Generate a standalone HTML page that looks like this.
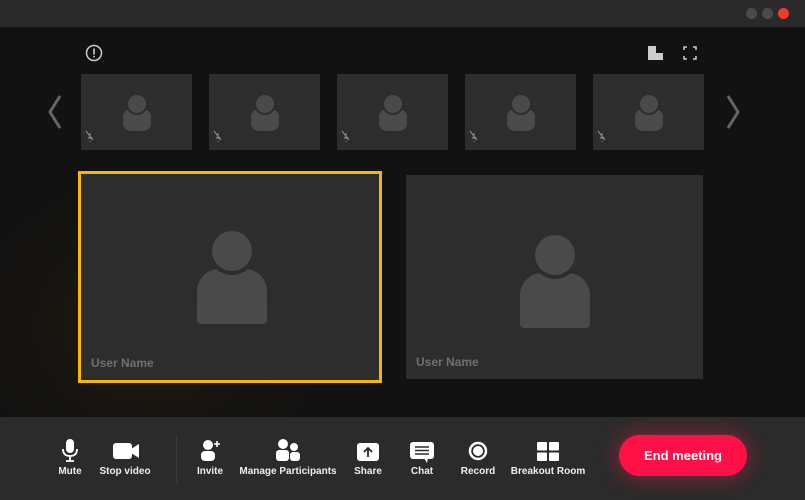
<!DOCTYPE html>
<html><head><meta charset="utf-8"><style>
*{margin:0;padding:0;box-sizing:border-box}
html,body{width:805px;height:500px;overflow:hidden}
body{background:#121212;font-family:"Liberation Sans",sans-serif;position:relative}
.tb{position:absolute;left:0;top:0;width:805px;height:27px;background:#2a2a2a}
.dot{position:absolute;top:8px;width:11px;height:11px;border-radius:50%;background:#4a4a4a}
.main{position:absolute;left:0;top:27px;width:805px;height:390px;background:#121212;overflow:hidden}
.glow{position:absolute;left:-60px;top:120px;width:420px;height:360px;background:radial-gradient(ellipse at center,rgba(90,60,10,.22),rgba(50,35,5,.08) 45%,rgba(0,0,0,0) 70%)}
.th{position:absolute;top:74px;width:111px;height:76px;background:#2d2d2d}
.big{position:absolute;background:#2d2d2d}
.lbl{position:absolute;left:10px;bottom:10px;color:#707070;font-size:12px;font-weight:bold}
.bar{position:absolute;left:0;top:417px;width:805px;height:83px;background:#2b2b2b}
.btn{position:absolute;top:0;text-align:center;color:#eee;font-size:10px;font-weight:bold}
.btn svg{display:block;margin:0 auto}
.btn span{position:absolute;left:50%;transform:translateX(-50%);top:49px;white-space:nowrap}
.end{position:absolute;left:619px;top:435px;width:128px;height:41px;border-radius:21px;background:#ff1148;color:#fff;font-weight:bold;font-size:13px;text-align:center;line-height:41px;box-shadow:0 0 18px 4px rgba(255,30,70,.35)}
</style></head><body>
<div class="main"><div class="glow"></div></div>
<div class="tb">
<div class="dot" style="left:746px"></div><div class="dot" style="left:762px"></div><div class="dot" style="left:778px;background:#f2392e"></div>
</div>
<svg style="position:absolute;left:85px;top:44px" width="18" height="18"><circle cx="9" cy="9" r="7.5" fill="none" stroke="#ccc" stroke-width="1.5"/><rect x="8.2" y="4.5" width="1.6" height="6" fill="#ccc"/><rect x="8.2" y="11.8" width="1.6" height="1.6" fill="#ccc"/></svg>
<svg style="position:absolute;left:648px;top:46px" width="16" height="14"><path d="M0 0H8V7H15V14H0Z" fill="#ccc"/></svg>
<svg style="position:absolute;left:683px;top:46px" width="14" height="14" fill="none" stroke="#ccc" stroke-width="1.5"><path d="M1 4V1H4M10 1H13V4M13 10V13H10M4 13H1V10"/></svg>
<svg style="position:absolute;left:44px;top:94px" width="20" height="36"><path d="M16 2L6 18L16 34" fill="none" stroke="#666" stroke-width="3"/></svg>
<svg style="position:absolute;left:724px;top:94px" width="20" height="36"><path d="M4 2L14 18L4 34" fill="none" stroke="#666" stroke-width="3"/></svg>

<div class="th" style="left:81px"></div><div class="th" style="left:209px"></div><div class="th" style="left:337px"></div><div class="th" style="left:465px"></div><div class="th" style="left:593px"></div>
<svg style="position:absolute;left:0;top:0" width="805" height="160">
<defs><g id="p"><rect x="-14" y="13" width="28" height="22" rx="8" fill="#4a4a4a"/><circle cx="0" cy="8" r="11" fill="#2d2d2d"/><circle cx="0" cy="8" r="9" fill="#4a4a4a"/>
<path d="M-47 37v6M-49 41q2 3 4 0M-51 35l7 9M-47 45v1" stroke="#888" stroke-width="1.1" fill="none"/></g></defs>
<use href="#p" x="137" y="96"/><use href="#p" x="265" y="96"/><use href="#p" x="393" y="96"/><use href="#p" x="521" y="96"/><use href="#p" x="649" y="96"/>
</svg>

<div class="big" style="left:78px;top:171px;width:304px;height:212px;border:3px solid #f5b800"><div class="lbl">User Name</div></div>
<div class="big" style="left:406px;top:175px;width:297px;height:204px"><div class="lbl">User Name</div></div>
<svg style="position:absolute;left:0;top:0" width="805" height="400">
<defs><g id="bp"><rect x="-35" y="18" width="70" height="55" rx="22" fill="#4a4a4a"/><rect x="-35" y="50" width="70" height="23" rx="4" fill="#4a4a4a"/><circle cx="0" cy="0" r="24" fill="#2d2d2d"/><circle cx="0" cy="0" r="20" fill="#4a4a4a"/></g></defs>
<use href="#bp" x="232" y="251"/><use href="#bp" x="555" y="255"/>
</svg>

<div class="bar">
<div style="position:absolute;left:176px;top:18px;width:1px;height:48px;background:#3a3a3a"></div>
<div class="btn" style="left:70px"><svg style="position:absolute;left:-9px;top:22px" width="18" height="24"><rect x="5" y="0" width="8" height="14" rx="4" fill="#fff"/><path d="M2 10q0 7 7 7q7 0 7-7M9 17v5M5 22h8" stroke="#fff" stroke-width="1.8" fill="none"/></svg><span>Mute</span></div>
<div class="btn" style="left:125px"><svg style="position:absolute;left:-12px;top:26px" width="26" height="16"><rect x="0" y="0" width="19" height="16" rx="3" fill="#fff"/><path d="M18 6L26 1V15L18 10Z" fill="#fff"/></svg><span>Stop video</span></div>
<div class="btn" style="left:210px"><svg style="position:absolute;left:-10px;top:22px" width="22" height="22"><circle cx="8" cy="6" r="5" fill="#fff"/><rect x="1" y="12" width="14" height="10" rx="4" fill="#fff"/><path d="M17 2v6M14 5h6" stroke="#fff" stroke-width="1.6"/></svg><span>Invite</span></div>
<div class="btn" style="left:288px"><svg style="position:absolute;left:-12px;top:22px" width="24" height="22"><circle cx="7" cy="5" r="5" fill="#fff"/><rect x="0" y="11" width="13" height="11" rx="3" fill="#fff"/><circle cx="18" cy="8" r="4" fill="#fff"/><rect x="14" y="13" width="10" height="9" rx="3" fill="#fff"/></svg><span>Manage Participants</span></div>
<div class="btn" style="left:368px"><svg style="position:absolute;left:-11px;top:26px" width="22" height="18"><rect x="0" y="0" width="22" height="18" rx="3" fill="#fff"/><path d="M11 14V5M7 9l4-4 4 4" stroke="#2b2b2b" stroke-width="1.8" fill="none"/></svg><span>Share</span></div>
<div class="btn" style="left:422px"><svg style="position:absolute;left:-12px;top:25px" width="24" height="22"><rect x="0" y="0" width="24" height="17" rx="3" fill="#fff"/><path d="M14 16l3 5 1-5z" fill="#fff"/><path d="M5 5h14M5 8.5h14M5 12h14" stroke="#2b2b2b" stroke-width="1.5"/></svg><span>Chat</span></div>
<div class="btn" style="left:478px"><svg style="position:absolute;left:-10px;top:24px" width="20" height="20"><circle cx="10" cy="10" r="8" fill="none" stroke="#fff" stroke-width="2.5"/><circle cx="10" cy="10" r="5" fill="#fff"/></svg><span>Record</span></div>
<div class="btn" style="left:548px"><svg style="position:absolute;left:-11px;top:25px" width="22" height="19" fill="#fff"><rect x="0" y="0" width="10" height="8.5" rx="1"/><rect x="12" y="0" width="10" height="8.5" rx="1"/><rect x="0" y="10.5" width="10" height="8.5" rx="1"/><rect x="12" y="10.5" width="10" height="8.5" rx="1"/></svg><span>Breakout Room</span></div>
</div>
<div class="end">End meeting</div>
</body></html>
